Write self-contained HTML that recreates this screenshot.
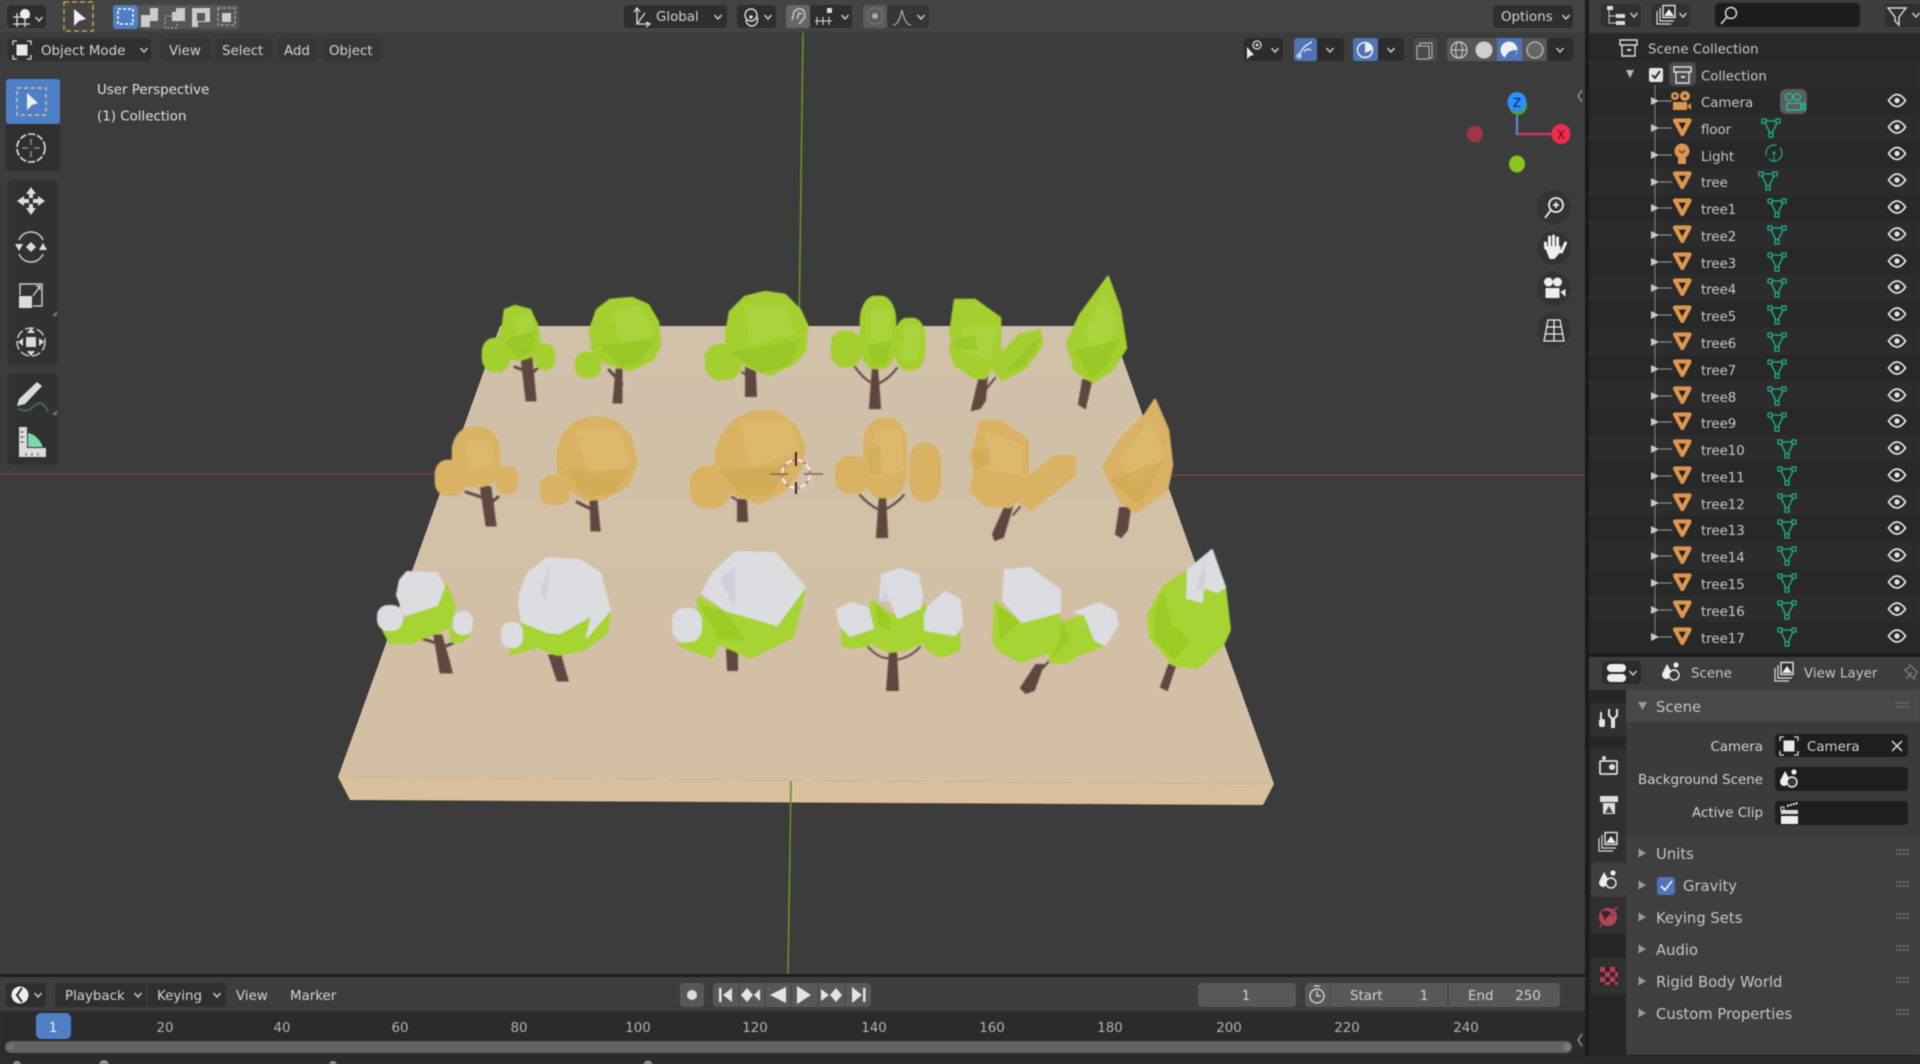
<!DOCTYPE html>
<html><head><meta charset="utf-8"><style>
html,body{margin:0;padding:0;background:#3c3c3c;overflow:hidden}
svg{display:block;filter:blur(.55px)}
text{font-family:"DejaVu Sans","Liberation Sans",sans-serif;font-size:13.4px;fill:#d2d2d2}
.o{fill:#c8c8c8;font-size:13.3px}
.p{font-size:14.8px;fill:#c4c4c4}
.n{fill:#b4b4b4;text-anchor:middle}
</style></head><body>
<svg width="1920" height="1064" viewBox="0 0 1920 1064" xmlns="http://www.w3.org/2000/svg">
<defs>
<linearGradient id="fl" x1="0" y1="0" x2="0" y2="1"><stop offset="0" stop-color="#d1c1aa"/><stop offset="1" stop-color="#d3bfa4"/></linearGradient>
<filter id="sf"><feGaussianBlur stdDeviation=".6"/></filter>
<symbol id="eye" overflow="visible"><path d="M-8.500 0Q0-12 8.500 0Q0 12-8.500 0Z" fill="none" stroke="#e4e4e4" stroke-width="1.700"/><circle r="2.600" fill="#e4e4e4"/></symbol>
<symbol id="mesh" overflow="visible"><path d="M-7-6.500H7.500L.3 7Z" fill="#2b2119" stroke="#dd9650" stroke-width="4.200" stroke-linejoin="round"/></symbol>
<symbol id="gm" overflow="visible"><path d="M-7-6H7L0 8Z" fill="none" stroke="#21a781" stroke-width="1.500"/><g fill="#2a2a2a" stroke="#21a781" stroke-width="1.400"><rect x="-9" y="-8" width="4" height="4"/><rect x="5" y="-8" width="4" height="4"/><rect x="-2" y="6" width="4" height="4"/></g></symbol>
<symbol id="arw" overflow="visible"><path d="M-4-4L4 0-4 4Z" fill="#c9c9c9"/><path d="M4 0H17" stroke="#8a8a8a" stroke-width="1.300"/></symbol>
<symbol id="tri" overflow="visible"><path d="M-3.500-4.500L4 0-3.500 4.500Z" fill="#9a9a9a"/></symbol>
<symbol id="grip" overflow="visible"><g fill="#6e6e6e"><rect x="-7" y="-3" width="2" height="2"/><rect x="-3.500" y="-3" width="2" height="2"/><rect x="0" y="-3" width="2" height="2"/><rect x="3.500" y="-3" width="2" height="2"/><rect x="-7" y="1" width="2" height="2"/><rect x="-3.500" y="1" width="2" height="2"/><rect x="0" y="1" width="2" height="2"/><rect x="3.500" y="1" width="2" height="2"/></g></symbol>
<symbol id="chev" overflow="visible"><path d="M-3.500-2L0 2 3.500-2" fill="none" stroke="#c8c8c8" stroke-width="1.500"/></symbol>
<symbol id="obj" overflow="visible"><rect x="-5.500" y="-5.500" width="11" height="11" fill="#e8e8e8"/><path d="M-9-5V-9H-5M5-9H9V-5M9 5V9H5M-5 9H-9V5" fill="none" stroke="#d8d8d8" stroke-width="1.300"/></symbol>
<symbol id="sc" overflow="visible"><path d="M-4-8L-9 2Q-9 7-4 7L2 3 0-1Z" fill="#eee"/><circle cx="3" cy="3" r="5" fill="#3a3a3a" stroke="#eee" stroke-width="1.400"/><circle cx="5" cy="-7" r="2.600" fill="#eee"/></symbol>
<symbol id="vl" overflow="visible"><path d="M-9-4V9H5" fill="none" stroke="#ddd" stroke-width="1.200"/><path d="M-6-7V6H8" fill="none" stroke="#ddd" stroke-width="1.200"/><rect x="-3" y="-9.500" width="12" height="12" fill="#2e2e2e" stroke="#e4e4e4" stroke-width="1.400"/><path d="M-2 1L3-6 8 1Z" fill="#eee"/></symbol>
</defs>

<!-- viewport -->
<rect width="1920" height="1064" fill="#1e1e1e"/>
<rect x="0" y="0" width="1585" height="974" fill="#3c3c3c"/>
<rect x="0" y="0" width="1585" height="32" fill="#444"/>

<!-- axis lines -->
<path d="M803 33L799 330" stroke="#6c8f2b" stroke-width="1.600"/>
<path d="M0 474H440" stroke="#8a3a4a" stroke-width="1.600"/>
<path d="M1165 475H1584" stroke="#8a3a4a" stroke-width="1.600"/>

<!-- floor -->
<polygon points="338,777 1274,784 1263,805 350,800" fill="#dabf9b"/>
<polygon points="500,326 1111,326 1274,784 338,777" fill="url(#fl)"/>
<path d="M791 781L788 974" stroke="#6c8f2b" stroke-width="1.600"/>

<!-- trees -->
<g filter="url(#sf)">
<g fill="#5e4640" stroke="#5e4640" stroke-linecap="round">
<path d="M522 358L527 400H535L531 358Z M515 367L528 372 M533 372L538 368" stroke-width="3"/>
<path d="M609 370L622 384 M617 370L614 402H621L621 370Z" stroke-width="3"/>
<path d="M746 368L746 396H756L755 372Z M742 372L750 378" stroke-width="2"/>
<path d="M873 368L870 408H880L877 368Z" stroke-width="2.200"/><path d="M855 367Q866 382 875 384M897 368Q888 380 877 384" stroke-width="2.200" fill="none"/>
<path d="M980 376L973 405 972 410 980 408 985 400 987 376Z M987 388L995 378" stroke-width="2"/>
<path d="M1083 380L1079 404 1085 408 1091 382Z" stroke-width="2"/>
<path d="M481 485L487 525H495L490 488Z M466 492L484 498 M492 502L498 497" stroke-width="3"/>
<path d="M585 497L591 500 592 530 599 530 596 500Z M577 502L593 510" stroke-width="3"/>
<path d="M738 500L738 521H747L746 500Z M732 497L742 503" stroke-width="2"/>
<path d="M880 497L877 537H887L885 497Z" stroke-width="2.200"/><path d="M860 495Q872 508 881 510M904 495Q895 505 884 510" stroke-width="2.200" fill="none"/>
<path d="M1006 505L993 534 995 540 1003 537 1012 507Z M1013 515L1020 507" stroke-width="2"/>
<path d="M1120 508L1116 534 1121 537 1127 530 1130 508Z" stroke-width="2"/>
<path d="M435 636L441 672H451L448 660 441 636Z M417 637L436 643 M446 646L453 643" stroke-width="3"/>
<path d="M550 656L558 680H567L560 656Z" stroke-width="3"/>
<path d="M727 650L728 670H737L737 652Z" stroke-width="2"/>
<path d="M890 652L887 690H898L896 652Z" stroke-width="2"/><path d="M868 647Q880 660 891 658M920 647Q910 658 895 660" stroke-width="2" fill="none"/>
<path d="M1036 665L1021 688 1026 693 1034 690 1043 665Z M1043 668L1050 660" stroke-width="2"/>
<path d="M1169 665L1161 687 1167 690 1175 666Z" stroke-width="2"/>
</g>

<!-- row 1 green -->
<g fill="#a3d02f" stroke="#a3d02f" stroke-width="2.500" stroke-linejoin="round">
<rect x="483" y="339" width="26" height="32" rx="11" ry="13"/><rect x="535" y="345" width="19" height="24" rx="8" ry="10"/>
<polygon points="503,325 505,310 515,306 530,310 537,325 540,345 535,355 520,360 505,358 498,340"/>
<polygon points="590,330 597,310 610,300 632,298 648,305 658,322 660,345 652,360 630,370 605,362 592,348"/>
<rect x="576" y="353" width="24" height="24" rx="10" ry="10"/>
<polygon points="726,335 730,312 745,297 765,292 785,295 800,310 807,325 805,350 795,362 770,375 745,365 728,352"/><rect x="706" y="345" width="34" height="34" rx="14" ry="14"/>
<rect x="861" y="297" width="34" height="71" rx="14" ry="24"/><rect x="832" y="332" width="28" height="34" rx="11" ry="13"/><rect x="896" y="319" width="28" height="50" rx="11" ry="18"/>
<polygon points="955,300 975,300 1000,318 1000,355 985,378 975,378 955,365 950,350 953,335 950,335"/>
<polygon points="994,370 1000,355 1020,335 1040,330 1042,345 1025,368 1002,380"/>
<polygon points="1108,277 1120,310 1126,348 1112,370 1093,382 1075,370 1067,343 1080,315"/>
</g>
<g fill="#b2d94a" opacity=".5">
<polygon points="515,318 530,312 536,338 518,348"/><polygon points="612,310 640,306 655,335 620,345"/>
<polygon points="745,305 785,305 795,335 750,345"/><polygon points="870,310 890,310 892,345 870,350"/><polygon points="965,325 998,325 990,360 960,350"/>
<polygon points="1105,290 1118,330 1095,360 1085,330"/><polygon points="905,325 920,325 918,360 900,360"/>
</g>
<g fill="#94c221" opacity=".6">
<polygon points="505,340 535,330 535,350 518,358"/><polygon points="600,345 655,340 640,362 620,368"/>
<polygon points="730,352 800,340 790,365 760,373"/><polygon points="868,345 892,340 885,365 872,366"/>
<polygon points="952,340 975,335 978,350 958,350"/><polygon points="1075,350 1120,340 1105,368 1090,378"/>
<polygon points="1005,372 1035,340 1038,348 1020,368"/>
</g>

<!-- row 2 yellow -->
<g fill="#d9b363" stroke="#d9b363" stroke-width="2.500" stroke-linejoin="round">
<rect x="436" y="461" width="28" height="34" rx="11" ry="13"/><rect x="497" y="467" width="20" height="26" rx="8" ry="10"/><rect x="453" y="428" width="46" height="58" rx="19" ry="23"/>
<polygon points="558,450 563,435 575,422 595,417 615,421 630,435 637,462 628,485 605,498 585,500 565,485 558,470"/><rect x="541" y="476" width="28" height="28" rx="11" ry="11"/>
<polygon points="716,450 722,435 735,420 755,411 775,411 795,425 805,447 800,470 785,490 760,503 735,495 715,470"/><rect x="691" y="467" width="38" height="40" rx="15" ry="16"/>
<rect x="864" y="419" width="42" height="78" rx="17" ry="28"/><rect x="836" y="457" width="32" height="36" rx="13" ry="14"/><rect x="910" y="444" width="30" height="56" rx="12" ry="20"/>
<polygon points="980,421 1000,421 1028,440 1028,490 1010,507 985,505 970,490 975,470 970,458 975,445"/>
<polygon points="1018,500 1025,480 1055,456 1075,456 1075,475 1050,495 1030,510"/>
<polygon points="1155,400 1168,430 1172,465 1167,490 1135,512 1120,500 1103,467 1120,440 1145,415"/>
</g>
<g fill="#ddbd76" opacity=".5">
<polygon points="575,430 620,430 632,465 590,480"/><polygon points="740,420 790,420 800,450 750,470"/><polygon points="875,430 900,430 905,470 870,480"/><polygon points="985,430 1022,445 1022,475 985,470"/><polygon points="1150,420 1165,455 1135,490 1120,460"/><polygon points="465,440 492,440 495,465 470,470"/>
</g>
<g fill="#cea750" opacity=".5">
<polygon points="565,470 630,470 615,492 585,497"/><polygon points="720,470 790,465 770,495 740,495"/><polygon points="868,450 880,445 882,475 870,475"/><polygon points="972,450 990,448 990,465 975,470"/><polygon points="1110,480 1165,460 1140,505"/>
</g>

<!-- row 3 snow -->
<g fill="#a6d431" stroke="#a6d431" stroke-width="2" stroke-linejoin="round">
<polygon points="447,585 455,607 450,627 430,635 412,643 390,643 383,630 407,618 435,603"/>
<polygon points="450,630 470,635 460,642 452,642"/>
<polygon points="522,622 547,632 560,633 592,615 587,637 597,627 610,613 607,633 583,650 557,655 537,647 510,655 512,647"/>
<polygon points="698,597 725,612 777,625 805,590 793,637 750,658 718,643 712,658 678,645 700,640"/>
<polygon points="872,600 890,615 925,605 928,640 905,650 890,652 875,645 865,630"/>
<polygon points="842,625 875,628 870,645 850,648 842,645"/>
<polygon points="925,633 958,625 960,650 940,657 925,648"/>
<polygon points="995,602 1020,622 1058,612 1060,640 1055,650 1020,662 998,650 993,640"/>
<polygon points="1055,625 1085,615 1105,645 1078,655 1065,663 1050,662 1050,640"/>
<polygon points="1188,570 1187,598 1202,602 1203,587 1217,592 1225,587 1230,630 1223,645 1198,668 1173,665 1150,637 1148,615 1163,587"/>
</g>
<g fill="#95c520" opacity=".55">
<polygon points="875,602 890,618 890,630 878,625"/><polygon points="997,605 1020,622 1000,640"/><polygon points="1060,615 1070,640 1050,660 1060,640"/><polygon points="700,605 725,612 745,640 720,640"/><polygon points="1155,610 1163,590 1172,625 1190,640 1175,660 1155,640"/>
</g>
<g fill="#dcdde0" stroke="#dcdde0" stroke-width="2" stroke-linejoin="round">
<polygon points="400,580 407,572 437,573 444,587 437,605 405,615 397,595"/>
<rect x="378" y="606" width="24" height="24" rx="10" ry="10"/><rect x="454" y="612" width="18" height="22" rx="8" ry="9"/>
<polygon points="520,593 528,573 547,558 580,560 600,573 610,610 587,637 592,615 560,633 547,632 522,622 519,605"/>
<rect x="502" y="623" width="20" height="24" rx="8" ry="10"/>
<polygon points="736,552 775,553 805,587 777,625 725,610 702,593 713,573"/><rect x="673" y="609" width="28" height="32" rx="11" ry="13"/>
<polygon points="882,575 900,569 918,575 922,595 920,608 898,618 890,600 880,600"/>
<polygon points="837,610 850,603 868,608 873,628 850,636 840,625"/>
<polygon points="930,605 945,592 960,600 962,625 955,635 925,630 925,615"/>
<polygon points="1005,570 1030,568 1060,590 1060,612 1022,622 1003,600"/>
<polygon points="1075,612 1100,603 1115,612 1118,625 1105,645 1095,640 1085,615"/>
<polygon points="1212,550 1225,587 1217,592 1203,587 1202,602 1187,598 1188,570"/>
</g>
<g fill="#c9cdd8" opacity=".7"><polygon points="540,590 550,565 548,585 545,600"/><polygon points="720,580 735,565 735,610"/><polygon points="885,590 880,600 890,600"/><polygon points="1205,560 1195,595 1205,585"/></g>
</g>

<!-- 3D cursor -->
<g fill="none">
<circle cx="796" cy="474" r="14" stroke="#d8708a" stroke-width="2"/>
<circle cx="796" cy="474" r="14" stroke="#f8efe8" stroke-width="2" stroke-dasharray="7 4"/>
<path d="M770 474H788M804 474H823" stroke="#7e7460" stroke-width="1.800"/>
<path d="M796 452V466M796 482V494" stroke="#352c20" stroke-width="2"/>
</g>

<!-- top header -->
<rect x="7" y="5" width="39" height="23" rx="4" fill="#2e2e2e"/>
<g fill="none" stroke="#ddd" stroke-width="1.300"><path d="M13 17H30M13 24H30M17 13V27M25 15V27"/></g><circle cx="25" cy="14" r="5" fill="#eee"/><use href="#chev" x="39" y="19"/>
<rect x="64" y="2" width="29" height="29" fill="none" stroke="#c9a042" stroke-width="1.500" stroke-dasharray="5 3"/><path d="M74 9V26L79 21 86 19Z" fill="#eee"/>
<rect x="113" y="5" width="25" height="24" rx="3" fill="#4f7fc6"/><rect x="138" y="5" width="101" height="24" rx="3" fill="#565656"/>
<rect x="118" y="9" width="15" height="15" fill="none" stroke="#fff" stroke-width="1.500" stroke-dasharray="3 2"/>
<path d="M141 15H150V8H158V21H150V27H141Z" fill="#ccc"/>
<path d="M172 12H176V8H185V21H172Z" fill="#ccc"/><rect x="165" y="16" width="12" height="12" fill="none" stroke="#bbb" stroke-dasharray="2 2"/>
<path d="M192 8H210V22H198V27H192Z" fill="#ccc"/><rect x="197" y="13" width="8" height="8" fill="#555"/>
<rect x="218" y="8" width="17" height="17" fill="none" stroke="#bbb" stroke-dasharray="3 2"/><rect x="222" y="13" width="9" height="9" fill="#ccc"/>

<rect x="624" y="5" width="103" height="23" rx="4" fill="#2e2e2e"/>
<g fill="none" stroke="#ddd" stroke-width="1.300"><path d="M637 9V24H648M637 24L645 13M634 12L637 8 640 12M646 22L650 24 646 27"/></g>
<text x="656" y="21">Global</text><use href="#chev" x="718" y="17"/>
<rect x="737" y="5" width="39" height="23" rx="4" fill="#2e2e2e"/><circle cx="751" cy="15" r="6" fill="none" stroke="#ddd" stroke-width="1.400"/><path d="M746 20A6 6 0 0 0 752 26 6 6 0 0 0 756 16" fill="none" stroke="#ddd" stroke-width="1.400"/><circle cx="751" cy="17" r="1.800" fill="#ddd"/><use href="#chev" x="768" y="17"/>
<rect x="786" y="5" width="24" height="23" rx="3" fill="#666"/><rect x="810" y="5" width="42" height="23" rx="3" fill="#2e2e2e"/>
<path d="M792 20L794 12Q799 6 804 11L805 17 799 24M797 19L799 13 802 14" fill="none" stroke="#bbb" stroke-width="1.800"/>
<path d="M815 21H832M817 17V25M823 17V25M829 17V25" stroke="#ddd"/><rect x="827" y="8" width="5" height="5" fill="#ddd"/><use href="#chev" x="845" y="17"/>
<rect x="863" y="5" width="24" height="23" rx="3" fill="#5c5c5c"/><rect x="887" y="5" width="42" height="23" rx="3" fill="#363636"/>
<circle cx="875" cy="16" r="8" fill="none" stroke="#7a7a7a"/><circle cx="875" cy="16" r="3" fill="#aaa"/>
<path d="M893 25Q899 25 902 10Q905 25 911 25" fill="none" stroke="#aaa" stroke-width="1.300"/><use href="#chev" x="921" y="17"/>
<rect x="1493" y="5" width="80" height="23" rx="4" fill="#2e2e2e"/><text x="1501" y="21">Options</text><use href="#chev" x="1566" y="17"/>

<!-- viewport header row -->
<rect x="8" y="38" width="143" height="23" rx="4" fill="#2f2f2f"/><use href="#obj" x="22" y="50"/><text x="41" y="55">Object Mode</text><use href="#chev" x="144" y="50"/>
<rect x="161" y="38" width="50" height="23" rx="4" fill="#363636"/><text x="169" y="55">View</text>
<rect x="215" y="38" width="57" height="23" rx="4" fill="#363636"/><text x="222" y="55">Select</text>
<rect x="277" y="38" width="41" height="23" rx="4" fill="#363636"/><text x="284" y="55">Add</text>
<rect x="322" y="38" width="60" height="23" rx="4" fill="#363636"/><text x="329" y="55">Object</text>
<text x="97" y="94" style="fill:#e0e0e0">User Perspective</text><text x="97" y="120.500" style="fill:#e0e0e0">(1) Collection</text>

<rect x="1244" y="38" width="39" height="23" rx="4" fill="#2c2c2c"/><path d="M1247 47V59L1250 56 1254 55Z" fill="#eee"/><circle cx="1257" cy="45" r="4" fill="none" stroke="#ddd" stroke-width="1.300"/><circle cx="1257" cy="45" r="1.500" fill="#ddd"/><use href="#chev" x="1275" y="50"/>
<rect x="1294" y="38" width="23" height="23" rx="3" fill="#4f74b5"/><rect x="1317" y="38" width="27" height="23" rx="3" fill="#2c2c2c"/><path d="M1299 57Q1301 47 1312 42M1304 52Q1306 48 1311 50" fill="none" stroke="#eee" stroke-width="1.300"/><circle cx="1299" cy="56" r="2" fill="none" stroke="#eee"/><use href="#chev" x="1330" y="50"/>
<rect x="1353" y="38" width="25" height="23" rx="3" fill="#4f74b5"/><rect x="1378" y="38" width="26" height="23" rx="3" fill="#2c2c2c"/><circle cx="1365" cy="50" r="7.500" fill="none" stroke="#eee" stroke-width="1.500"/><path d="M1365 43A7 7 0 0 1 1372 50L1365 53Z" fill="#eee"/><use href="#chev" x="1391" y="50"/>
<rect x="1414" y="38" width="23" height="23" rx="3" fill="#4a4a4a"/><rect x="1420" y="43" width="12" height="15" fill="none" stroke="#bbb"/><rect x="1417" y="46" width="12" height="13" fill="#4a4a4a" stroke="#bbb"/>
<rect x="1447" y="38" width="100" height="23" rx="3" fill="#565656"/><rect x="1497" y="38" width="25" height="23" fill="#4f74b5"/><rect x="1547" y="38" width="26" height="23" rx="3" fill="#2c2c2c"/>
<circle cx="1459" cy="50" r="8" fill="none" stroke="#ccc" stroke-width="1.200"/><ellipse cx="1459" cy="50" rx="3.500" ry="8" fill="none" stroke="#ccc"/><path d="M1451 50H1467" stroke="#ccc"/>
<circle cx="1484" cy="50" r="8.500" fill="#cfcfcf"/><circle cx="1509" cy="50" r="8.500" fill="#eee"/><path d="M1505 58Q1507 50 1517 50A8.500 8.500 0 0 1 1505 58Z" fill="#4f74b5"/>
<circle cx="1535" cy="50" r="8" fill="#666" stroke="#bbb" stroke-width="1.300"/><use href="#chev" x="1560" y="50"/>

<!-- tools -->
<rect x="6" y="79" width="54" height="45" rx="3" fill="#4f7fc6"/>
<rect x="17" y="88" width="29" height="27" fill="none" stroke="#d8c9a0" stroke-width="1.400" stroke-dasharray="4 3"/><path d="M27 93V110L32 105 38 103Z" fill="#eee"/>
<rect x="6" y="124" width="54" height="47" rx="3" fill="#2f2f2f"/>
<circle cx="31" cy="148" r="14" fill="none" stroke="#e9dcd8" stroke-width="1.600" stroke-dasharray="7 2"/><path d="M22 148H28M34 148H40M31 139V145M31 151V157" stroke="#8a8a8a" stroke-width="1.600"/>
<rect x="8" y="180" width="50" height="185" rx="4" fill="#313131"/>
<rect x="8" y="373" width="50" height="92" rx="4" fill="#313131"/>
<g fill="#dcdcdc">
<path d="M31 187L26 194H36ZM31 215L26 208H36ZM17 201L24 196V206ZM45 201L38 196V206Z"/><rect x="29" y="193" width="4" height="5"/><rect x="29" y="204" width="4" height="5"/><rect x="24" y="199" width="5" height="4"/><rect x="33" y="199" width="5" height="4"/>
<path d="M31 242L36 247 31 252 26 247Z"/><path d="M15 244H23L19 251ZM39 250H47L43 243Z"/>
<rect x="19" y="296" width="13" height="12"/>
<rect x="26" y="337" width="10" height="10"/>
<path d="M31 328L27 333H35ZM31 356L27 351H35ZM18 342L23 338V346ZM44 342L39 338V346Z"/>
<path d="M37 382L42 386 25 404 17 406 19 399Z"/>
<path d="M19 427H27V448H46V457H19Z"/>
</g>
<path d="M19 240A13 13 0 0 1 43 240M19 254A13 13 0 0 0 43 254" fill="none" stroke="#ccc" stroke-width="1.500"/>
<path d="M20 295V284H42V306H33M33 296L40 286M36 286H40V290" fill="none" stroke="#c8c8c8" stroke-width="1.500"/>
<circle cx="31" cy="342" r="14" fill="none" stroke="#ccc" stroke-width="1.500" stroke-dasharray="9 3"/>
<path d="M18 408Q26 414 34 406T48 412" fill="none" stroke="#3d6c5a" stroke-width="1.800"/>
<path d="M28 447V433Q38 435 43 447Z" fill="#7fd8a8"/><path d="M20 432H24M20 437H24M20 442H24M32 453V456M38 453V456M26 453V456" stroke="#555"/>
<path d="M52 316H57V311Z" fill="#777"/><path d="M52 415H57V410Z" fill="#777"/>

<!-- gizmo -->
<path d="M1517 112V134H1552" fill="none" stroke="#4a90d0" stroke-width="2.200"/><path d="M1518 134H1552" stroke="#c8354e" stroke-width="2.500"/>
<ellipse cx="1475" cy="134" rx="8" ry="8.500" fill="#9e3548"/>
<ellipse cx="1517" cy="164" rx="8" ry="8.500" fill="#86c61b"/>
<ellipse cx="1518" cy="105" rx="9" ry="10" fill="#5d9a2a"/><ellipse cx="1517" cy="102" rx="9.500" ry="10" fill="#2c8fff"/>
<ellipse cx="1561" cy="134" rx="9.500" ry="10" fill="#f12b4e"/>
<text x="1517" y="107" style="font-size:12px;fill:#123;text-anchor:middle">Z</text><text x="1561" y="139" style="font-size:12px;fill:#611;text-anchor:middle">X</text>
<!-- nav buttons -->
<g fill="#333"><circle cx="1554" cy="207" r="17"/><circle cx="1554" cy="248" r="17"/><circle cx="1554" cy="289" r="17"/><circle cx="1554" cy="330" r="17"/></g>
<circle cx="1556" cy="205" r="7" fill="none" stroke="#eee" stroke-width="1.800"/><path d="M1551 210L1545 218M1553 205H1559M1556 202V208" stroke="#eee" stroke-width="1.800"/>
<g transform="translate(-1.500 0)"><path d="M1547 248V243M1551 248V237M1555 248V236M1559 248V238M1563 252L1567 243" stroke="#eee" stroke-width="3" stroke-linecap="round"/><path d="M1546 246H1562V252L1556 259H1551Z" fill="#eee"/>
<circle cx="1550" cy="282" r="4.500" fill="#eee"/><circle cx="1559" cy="282" r="4.500" fill="#eee"/><rect x="1547" y="288" width="14" height="10" fill="#eee"/><path d="M1562 292L1567 289V297Z" fill="#eee"/></g>
<path d="M1548 320H1560L1564 341H1544ZM1554 320V341M1546 327H1562M1545 334H1563" fill="none" stroke="#eee" stroke-width="1.300"/>
<path d="M1582 90L1578 96 1582 102" fill="none" stroke="#999" stroke-width="1.300"/>

<!-- timeline -->
<rect x="0" y="977" width="1585" height="34" fill="#3d3d3d"/>
<rect x="0" y="1011" width="1585" height="45" fill="#2b2b2b"/>
<rect x="6" y="983" width="40" height="24" rx="4" fill="#2e2e2e"/><circle cx="20" cy="995" r="8.500" fill="#eee"/><path d="M22 988L17 995 22 1002" fill="none" stroke="#2e2e2e" stroke-width="2"/><use href="#chev" x="38" y="995"/>
<rect x="55" y="983" width="171" height="24" rx="4" fill="#2f2f2f"/><path d="M147 983V1007" stroke="#444"/>
<text x="65" y="1000">Playback</text><use href="#chev" x="138" y="995"/><text x="157" y="1000">Keying</text><use href="#chev" x="217" y="995"/>
<text x="236" y="1000">View</text><text x="290" y="1000">Marker</text>
<rect x="680" y="983" width="24" height="24" rx="4" fill="#585858"/><circle cx="692" cy="995" r="5" fill="#ddd"/>
<rect x="713" y="983" width="158" height="24" rx="4" fill="#585858"/><path d="M739 983V1007M765 983V1007M791 983V1007M818 983V1007M845 983V1007" stroke="#444"/>
<g fill="#e4e4e4"><rect x="719" y="988" width="2.500" height="14"/><path d="M723 995L732 988V1002Z"/>
<path d="M741 995L747 988 753 995 747 1002ZM754 995L760 989V1001Z"/><path d="M786 987L770 995 786 1003Z"/><path d="M797 986L811 995 797 1004Z"/>
<path d="M821 989L829 995 821 1001ZM830 995L836 988 842 995 836 1002Z"/><path d="M852 987L862 995 852 1003Z"/><rect x="863" y="988" width="2.500" height="14"/></g>
<rect x="1198" y="983" width="98" height="24" rx="4" fill="#585858"/><text x="1246" y="1000" style="text-anchor:middle">1</text>
<rect x="1305" y="983" width="255" height="24" rx="4" fill="#585858"/><path d="M1330 983V1007M1448 983V1007" stroke="#444"/>
<circle cx="1317" cy="996" r="7" fill="none" stroke="#ddd" stroke-width="1.300"/><path d="M1317 991V996H1321M1314 986H1320" fill="none" stroke="#ddd" stroke-width="1.300"/>
<text x="1350" y="1000">Start</text><text x="1424" y="1000" style="text-anchor:middle">1</text><text x="1468" y="1000">End</text><text x="1528" y="1000" style="text-anchor:middle">250</text>
<rect x="36" y="1013" width="35" height="26" rx="5" fill="#4f7fc6"/><text x="53" y="1032" style="text-anchor:middle;fill:#eee">1</text>
<text class="n" x="165" y="1032">20</text><text class="n" x="282" y="1032">40</text><text class="n" x="400" y="1032">60</text><text class="n" x="519" y="1032">80</text><text class="n" x="638" y="1032">100</text><text class="n" x="755" y="1032">120</text><text class="n" x="874" y="1032">140</text><text class="n" x="992" y="1032">160</text><text class="n" x="1110" y="1032">180</text><text class="n" x="1229" y="1032">200</text><text class="n" x="1347" y="1032">220</text><text class="n" x="1466" y="1032">240</text>
<rect x="5" y="1041" width="1567" height="12" rx="6" fill="#626262"/><circle cx="1567" cy="1047" r="4" fill="#7a7a7a"/><circle cx="11" cy="1047" r="3" fill="#747474"/>
<path d="M1582 1034L1578 1040 1582 1046" fill="none" stroke="#999" stroke-width="1.300"/>

<!-- status bar -->
<rect x="0" y="1056" width="1920" height="8" fill="#2c2c2c"/>
<g fill="#ddd" opacity=".6"><circle cx="17" cy="1065" r="4"/><circle cx="104" cy="1065" r="5"/><circle cx="333" cy="1065" r="4"/><circle cx="648" cy="1065" r="4.500"/></g>

<!-- right side divider -->
<rect x="1585" y="0" width="4" height="1056" fill="#1b1b1b"/>

<!-- outliner -->
<rect x="1589" y="0" width="331" height="33" fill="#3d3d3d"/>
<rect x="1589" y="33" width="331" height="620" fill="#282828"/>
<g fill="#2c2c2c"><rect x="1589" y="61" width="331" height="27"/><rect x="1589" y="114" width="331" height="27"/><rect x="1589" y="168" width="331" height="27"/><rect x="1589" y="221" width="331" height="27"/><rect x="1589" y="274" width="331" height="27"/><rect x="1589" y="328" width="331" height="27"/><rect x="1589" y="381" width="331" height="27"/><rect x="1589" y="435" width="331" height="27"/><rect x="1589" y="488" width="331" height="27"/><rect x="1589" y="542" width="331" height="27"/><rect x="1589" y="595" width="331" height="27"/></g>
<rect x="1601" y="4" width="40" height="23" rx="4" fill="#303030"/><rect x="1607" y="6" width="6" height="4" fill="#ddd"/><rect x="1616" y="14" width="9" height="4" fill="#ddd"/><rect x="1616" y="21" width="9" height="4" fill="#ddd"/><path d="M1609 10V23H1616M1609 16H1616" fill="none" stroke="#ccc"/><use href="#chev" x="1634" y="15"/>
<rect x="1652" y="4" width="38" height="23" rx="4" fill="#303030"/><use href="#vl" x="1666" y="15"/><use href="#chev" x="1683" y="15"/>
<rect x="1715" y="3" width="145" height="24" rx="4" fill="#1c1c1c"/><circle cx="1731" cy="13" r="5.500" fill="none" stroke="#ddd" stroke-width="1.400"/><path d="M1727 17L1721 24" stroke="#ddd" stroke-width="1.500"/>
<rect x="1885" y="4" width="40" height="23" rx="4" fill="#303030"/><path d="M1888 8H1906L1899 17V25L1895 21V17Z" fill="none" stroke="#ddd" stroke-width="1.400"/><use href="#chev" x="1916" y="15"/>

<g fill="none" stroke="#ddd" stroke-width="1.400"><path d="M1620 40H1637V45H1620ZM1622 45V56H1635V45"/></g><rect x="1627" y="49" width="4" height="2" fill="#ddd"/>
<rect x="1669" y="62" width="27" height="24" rx="5" fill="#555" opacity=".75"/><g fill="none" stroke="#ddd" stroke-width="1.400"><path d="M1674 67H1691V72H1674ZM1676 72V83H1689V72"/></g><rect x="1681" y="76" width="4" height="2" fill="#ddd"/>
<text class="o" x="1648" y="53.500">Scene Collection</text>
<path d="M1626 70H1634L1630 78Z" fill="#bbb"/>
<rect x="1649" y="68" width="14" height="14" rx="2" fill="#e4e4e4"/><path d="M1652 75L1655 78 1660 71" fill="none" stroke="#222" stroke-width="1.800"/>
<text class="o" x="1701" y="80.500">Collection</text>
<path d="M1655 85V636" stroke="#777" stroke-width="1.200"/>

<!-- rows -->
<use href="#arw" x="1655" y="101"/><circle cx="1675" cy="96" r="4" fill="#dd9650"/><circle cx="1685" cy="96" r="5" fill="#dd9650"/><rect x="1673" y="102" width="14" height="8" fill="#dd9650"/><path d="M1687 106L1691 103V110Z" fill="#dd9650"/><circle cx="1675" cy="96" r="1.500" fill="#333"/><circle cx="1685" cy="96" r="1.500" fill="#333"/>
<text class="o" x="1701" y="107">Camera</text>
<rect x="1780" y="89" width="27" height="25" rx="6" fill="#5a5f5e"/><g fill="none" stroke="#22c09a" stroke-width="1.300"><circle cx="1789" cy="97" r="3.500"/><circle cx="1797" cy="97" r="3.500"/><rect x="1787" y="103" width="14" height="7"/><path d="M1801 106L1805 103V110Z"/></g>
<use href="#eye" x="1897" y="100.500"/>

<use href="#arw" x="1655" y="128"/><use href="#mesh" x="1682" y="127"/><text class="o" x="1701" y="134">floor</text><use href="#gm" x="1771" y="127"/><use href="#eye" x="1897" y="127"/>

<use href="#arw" x="1655" y="155"/><circle cx="1682" cy="151" r="7.500" fill="#dd9650"/><rect x="1678" y="158" width="8" height="6" fill="#dd9650"/><path d="M1679 150L1682 153 1685 150" stroke="#333" fill="none"/><text class="o" x="1701" y="161">Light</text><circle cx="1774" cy="153" r="8" fill="none" stroke="#21a781" stroke-width="1.300" stroke-dasharray="18 4"/><circle cx="1774" cy="153" r="1.500" fill="#21a781"/><path d="M1774 155V163" stroke="#21a781"/><use href="#eye" x="1897" y="153.500"/>

<use href="#arw" x="1655" y="182"/><use href="#mesh" x="1682" y="180"/><text class="o" x="1701" y="187">tree</text><use href="#gm" x="1768" y="180"/><use href="#eye" x="1897" y="180"/>
<use href="#arw" x="1655" y="208"/><use href="#mesh" x="1682" y="207"/><text class="o" x="1701" y="214">tree1</text><use href="#gm" x="1777" y="207"/><use href="#eye" x="1897" y="207"/>
<use href="#arw" x="1655" y="235"/><use href="#mesh" x="1682" y="234"/><text class="o" x="1701" y="241">tree2</text><use href="#gm" x="1777" y="234"/><use href="#eye" x="1897" y="234"/>
<use href="#arw" x="1655" y="262"/><use href="#mesh" x="1682" y="261"/><text class="o" x="1701" y="268">tree3</text><use href="#gm" x="1777" y="261"/><use href="#eye" x="1897" y="261"/>
<use href="#arw" x="1655" y="288"/><use href="#mesh" x="1682" y="287"/><text class="o" x="1701" y="294">tree4</text><use href="#gm" x="1777" y="287"/><use href="#eye" x="1897" y="287"/>
<use href="#arw" x="1655" y="315"/><use href="#mesh" x="1682" y="314"/><text class="o" x="1701" y="321">tree5</text><use href="#gm" x="1777" y="314"/><use href="#eye" x="1897" y="314"/>
<use href="#arw" x="1655" y="342"/><use href="#mesh" x="1682" y="341"/><text class="o" x="1701" y="348">tree6</text><use href="#gm" x="1777" y="341"/><use href="#eye" x="1897" y="341"/>
<use href="#arw" x="1655" y="369"/><use href="#mesh" x="1682" y="368"/><text class="o" x="1701" y="375">tree7</text><use href="#gm" x="1777" y="368"/><use href="#eye" x="1897" y="368"/>
<use href="#arw" x="1655" y="396"/><use href="#mesh" x="1682" y="395"/><text class="o" x="1701" y="402">tree8</text><use href="#gm" x="1777" y="395"/><use href="#eye" x="1897" y="395"/>
<use href="#arw" x="1655" y="422"/><use href="#mesh" x="1682" y="421"/><text class="o" x="1701" y="428">tree9</text><use href="#gm" x="1777" y="421"/><use href="#eye" x="1897" y="421"/>
<use href="#arw" x="1655" y="449"/><use href="#mesh" x="1682" y="448"/><text class="o" x="1701" y="455">tree10</text><use href="#gm" x="1787" y="448"/><use href="#eye" x="1897" y="448"/>
<use href="#arw" x="1655" y="476"/><use href="#mesh" x="1682" y="475"/><text class="o" x="1701" y="482">tree11</text><use href="#gm" x="1787" y="475"/><use href="#eye" x="1897" y="475"/>
<use href="#arw" x="1655" y="503"/><use href="#mesh" x="1682" y="502"/><text class="o" x="1701" y="509">tree12</text><use href="#gm" x="1787" y="502"/><use href="#eye" x="1897" y="502"/>
<use href="#arw" x="1655" y="530"/><use href="#mesh" x="1682" y="528"/><text class="o" x="1701" y="535">tree13</text><use href="#gm" x="1787" y="528"/><use href="#eye" x="1897" y="528"/>
<use href="#arw" x="1655" y="556"/><use href="#mesh" x="1682" y="555"/><text class="o" x="1701" y="562">tree14</text><use href="#gm" x="1787" y="555"/><use href="#eye" x="1897" y="555"/>
<use href="#arw" x="1655" y="583"/><use href="#mesh" x="1682" y="582"/><text class="o" x="1701" y="589">tree15</text><use href="#gm" x="1787" y="582"/><use href="#eye" x="1897" y="582"/>
<use href="#arw" x="1655" y="610"/><use href="#mesh" x="1682" y="609"/><text class="o" x="1701" y="616">tree16</text><use href="#gm" x="1787" y="609"/><use href="#eye" x="1897" y="609"/>
<use href="#arw" x="1655" y="637"/><use href="#mesh" x="1682" y="636"/><text class="o" x="1701" y="643">tree17</text><use href="#gm" x="1787" y="636"/><use href="#eye" x="1897" y="636"/>

<!-- properties -->
<rect x="1589" y="653" width="331" height="403" fill="#1b1b1b"/>
<rect x="1589" y="657" width="331" height="33" fill="#3d3d3d"/>
<rect x="1589" y="690" width="37" height="366" fill="#262626"/>
<rect x="1626" y="690" width="294" height="365" fill="#3f3f3f"/>
<rect x="1626" y="690" width="294" height="32" fill="#484848"/>
<rect x="1626" y="722" width="294" height="114" fill="#3b3b3b"/>

<rect x="1602" y="661" width="39" height="23" rx="4" fill="#2b2b2b"/><rect x="1607" y="664" width="19" height="8" rx="4" fill="#eee"/><rect x="1607" y="674" width="19" height="8" rx="4" fill="#eee"/><use href="#chev" x="1633" y="673"/>
<use href="#sc" x="1671" y="672"/><text x="1691" y="677.500" style="fill:#c8c8c8">Scene</text>
<use href="#vl" x="1784" y="672"/><text x="1804" y="677.500" style="fill:#c8c8c8">View Layer</text>
<path d="M1906 679L1912 672M1909 664L1918 673M1910 667L1905 670 1914 679 1916 673" fill="none" stroke="#777" stroke-width="1.500"/>

<!-- tabs -->
<g fill="#303030"><rect x="1591" y="703" width="35" height="34" rx="3"/><rect x="1591" y="748" width="35" height="114" rx="3"/><rect x="1591" y="897" width="35" height="37" rx="3"/><rect x="1591" y="958" width="35" height="37" rx="3"/></g>
<rect x="1591" y="862" width="35" height="35" rx="3" fill="#3f3f3f"/>
<g fill="#e4e4e4"><rect x="1600" y="712" width="2" height="7"/><rect x="1599" y="719" width="6" height="8" rx="2"/><path d="M1610 709V715L1613 718 1616 715V709H1618V716L1615 719V728H1611V719L1608 716V709Z"/></g>
<rect x="1600" y="761" width="17" height="13" rx="1" fill="none" stroke="#ddd" stroke-width="1.800"/><circle cx="1604" cy="758" r="2" fill="#ddd"/><circle cx="1612" cy="767" r="3" fill="#ddd"/>
<rect x="1600" y="796" width="18" height="6" fill="#ddd"/><rect x="1603" y="803" width="12" height="11" fill="#ddd"/><path d="M1605 813L1609 806 1613 813Z" fill="#444"/>
<use href="#vl" x="1608" y="842"/><use href="#sc" x="1608" y="880"/>
<circle cx="1608" cy="917" r="9" fill="#b0455a"/><path d="M1601 912Q1608 908 1614 916 1608 914 1605 920Z" fill="#3e2029"/><path d="M1600 927L1617 907" stroke="#b0455a" stroke-width="1.500"/>
<rect x="1600" y="967" width="18" height="18" fill="#3e2029"/><g fill="#b0455a"><rect x="1600" y="967" width="5" height="5"/><rect x="1610" y="967" width="5" height="5"/><rect x="1605" y="972" width="5" height="5"/><rect x="1615" y="972" width="3" height="5"/><rect x="1600" y="977" width="5" height="5"/><rect x="1610" y="977" width="5" height="5"/><rect x="1605" y="982" width="5" height="3"/><rect x="1615" y="982" width="3" height="3"/></g>

<!-- scene panel -->
<path d="M1638 702H1647L1642.500 710Z" fill="#9a9a9a"/><text class="p" x="1656" y="712">Scene</text><use href="#grip" x="1903" y="705"/>
<text x="1763" y="751" style="text-anchor:end">Camera</text>
<text x="1763" y="784" style="text-anchor:end">Background Scene</text>
<text x="1763" y="817" style="text-anchor:end">Active Clip</text>
<rect x="1775" y="734" width="133" height="23" rx="4" fill="#1e1e1e"/><rect x="1775" y="767" width="133" height="24" rx="4" fill="#1e1e1e"/><rect x="1775" y="801" width="133" height="24" rx="4" fill="#1e1e1e"/>
<use href="#obj" x="1789" y="746"/><text x="1807" y="751">Camera</text><path d="M1892 741L1902 751M1902 741L1892 751" stroke="#e0e0e0" stroke-width="1.400"/>
<use href="#sc" x="1789" y="779"/>
<rect x="1781" y="816" width="17" height="8" fill="#eee"/><rect x="1781" y="810" width="17" height="4" fill="#ddd"/><rect x="1781" y="807" width="3" height="4" fill="none" stroke="#ddd"/><path d="M1787 806L1798 803" stroke="#eee" stroke-width="2" stroke-dasharray="2 1"/>

<use href="#tri" x="1642" y="853"/><text class="p" x="1656" y="859">Units</text><use href="#grip" x="1903" y="852"/>
<use href="#tri" x="1642" y="885"/><rect x="1657" y="877" width="18" height="18" rx="3" fill="#4f74b8"/><path d="M1661 886L1665 890 1672 881" fill="none" stroke="#eee" stroke-width="1.800"/><text class="p" x="1683" y="891">Gravity</text><use href="#grip" x="1903" y="884"/>
<use href="#tri" x="1642" y="917"/><text class="p" x="1656" y="923">Keying Sets</text><use href="#grip" x="1903" y="916"/>
<use href="#tri" x="1642" y="949"/><text class="p" x="1656" y="955">Audio</text><use href="#grip" x="1903" y="948"/>
<use href="#tri" x="1642" y="981"/><text class="p" x="1656" y="987">Rigid Body World</text><use href="#grip" x="1903" y="980"/>
<use href="#tri" x="1642" y="1013"/><text class="p" x="1656" y="1019">Custom Properties</text><use href="#grip" x="1903" y="1012"/>
</svg>
</body></html>
